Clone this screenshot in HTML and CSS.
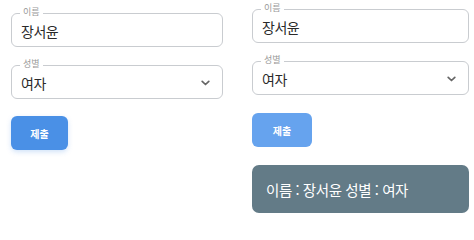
FILE: index.html
```html
<!DOCTYPE html>
<html lang="ko">
<head>
<meta charset="utf-8">
<link rel="stylesheet" href="styles.css">
</head>
<body>
<div class="page">
  <form class="panel panel-a">
    <div class="field">
      <span class="legend">이름</span>
      <div class="control">장서윤</div>
    </div>
    <div class="field">
      <span class="legend">성별</span>
      <div class="control">
        <span>여자</span>
        <svg class="chev" width="9" height="6" viewBox="0 0 9 6"><path d="M1.2 1.3l3.3 3.2 3.3-3.2" fill="none" stroke="#666" stroke-width="1.7" stroke-linecap="round" stroke-linejoin="round"/></svg>
      </div>
    </div>
    <button type="button" class="btn btn-a">제출</button>
  </form>
  <form class="panel panel-b">
    <div class="field">
      <span class="legend">이름</span>
      <div class="control">장서윤</div>
    </div>
    <div class="field">
      <span class="legend">성별</span>
      <div class="control">
        <span>여자</span>
        <svg class="chev" width="9" height="6" viewBox="0 0 9 6"><path d="M1.2 1.3l3.3 3.2 3.3-3.2" fill="none" stroke="#666" stroke-width="1.7" stroke-linecap="round" stroke-linejoin="round"/></svg>
      </div>
    </div>
    <button type="button" class="btn btn-b">제출</button>
    <div class="result">이름 : 장서윤 성별 : 여자</div>
  </form>
</div>
</body>
</html>
```
FILE: styles.css
```css
html, body {
  margin: 0;
  padding: 0;
  background: #ffffff;
}
body {
  font-family: "Noto Sans CJK KR", "Noto Sans", sans-serif;
  color: #222;
}
.page {
  display: flex;
  align-items: flex-start;
  gap: 29px;
  padding-left: 11px;
}
.panel {
  display: flex;
  flex-direction: column;
  align-items: flex-start;
  margin: 0;
}
.panel-a {
  width: 212px;
  padding-top: 13px;
  gap: 18px;
}
.panel-b {
  width: 217px;
  padding-top: 9px;
  gap: 18px;
}
.field {
  position: relative;
  width: 100%;
}
.control {
  box-sizing: border-box;
  height: 34px;
  border: 1px solid #c9ccd0;
  border-radius: 6px;
  display: flex;
  align-items: center;
  justify-content: space-between;
  padding: 1px 12px 0 9px;
  font-size: 14px;
  letter-spacing: -0.5px;
  color: #2a2a2a;
}
.legend {
  position: absolute;
  top: -7px;
  left: 9px;
  padding: 0 3px;
  background: #fff;
  font-size: 9px;
  line-height: 12px;
  color: #999;
}
.chev {
  display: block;
}
.btn {
  border: none;
  border-radius: 6px;
  color: #fff;
  font-family: "Noto Sans CJK KR", sans-serif;
  font-weight: 700;
  font-size: 10px;
  height: 34px;
  padding: 0;
}
.btn-a {
  width: 57px;
  margin-top: -1px;
  background: #4a90e6;
  box-shadow: 0 2px 5px rgba(74, 144, 230, 0.25);
}
.btn-b {
  width: 60px;
  background: #66a3ee;
}
.result {
  box-sizing: border-box;
  width: 100%;
  height: 48px;
  background: #637b87;
  border-radius: 7px;
  color: #fff;
  font-size: 14.5px;
  letter-spacing: -0.4px;
  display: flex;
  align-items: center;
  padding-left: 14px;
}
```
